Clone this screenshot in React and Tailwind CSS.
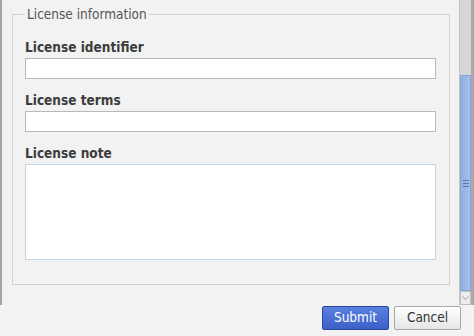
import React from 'react';

const font = { fontFamily: '"DejaVu Sans Condensed", "DejaVu Sans", Verdana, sans-serif' };

function Field({ label, children, first }) {
  return (
    <div className={first ? '' : 'mt-[13px]'}>
      <label className="block text-[13.5px] font-bold leading-[16px] text-[#3c3c3c] mb-[3px]">
        {label}
      </label>
      {children}
    </div>
  );
}

function Scrollbar() {
  return (
    <div className="w-[15px] flex flex-col bg-[#d6d6d6] border-l border-[#c4c4c4] border-r-[3px] border-r-[#a9a9a9]">
      <div className="h-[75px]" />
      <div className="flex-1 flex items-center justify-center bg-gradient-to-r from-[#8fb0e2] to-[#a6c0ea] border border-[#86a3d6]">
        <div className="flex flex-col gap-[2px]">
          <div className="w-[6px] h-[1px] bg-[#5577b8]" />
          <div className="w-[6px] h-[1px] bg-[#5577b8]" />
          <div className="w-[6px] h-[1px] bg-[#5577b8]" />
        </div>
      </div>
      <div className="h-[14px] flex items-center justify-center bg-[#ececec] border border-[#c0c0c0]">
        <svg width="7" height="5" viewBox="0 0 7 5">
          <path d="M0.5 0.5 L3.5 3.5 L6.5 0.5" fill="none" stroke="#9a9a9a" strokeWidth="1" />
        </svg>
      </div>
    </div>
  );
}

export default function App() {
  return (
    <div className="w-[474px] h-[336px] bg-[#f2f2f2] flex flex-col overflow-hidden" style={font}>
      <div className="h-[305px] flex border-l-2 border-[#a4a4a4]">
        <div className="flex-1 pl-[10px] pr-[9px]">
          <fieldset className="mt-[6px] border border-[#d2d2d2] pl-[12px] pr-[13px] pt-[16px] pb-[24px]">
            <legend className="px-[2px] text-[13.5px] leading-[17px] text-[#555555]">License information</legend>
            <Field label="License identifier" first>
              <input type="text" className="block w-full h-[21px] bg-white border border-[#b9b9b9] outline-none" />
            </Field>
            <Field label="License terms">
              <input type="text" className="block w-full h-[21px] bg-white border border-[#b9b9b9] outline-none" />
            </Field>
            <Field label="License note">
              <textarea className="block w-full h-[96px] bg-white border border-[#c3d3e6] resize-none outline-none" />
            </Field>
          </fieldset>
        </div>
        <Scrollbar />
      </div>
      <div className="flex-1 flex items-start justify-end gap-[5px] pr-[13px] pt-[1px]">
        <button className="w-[67px] h-[24px] rounded-[2px] border border-[#2c48a0] bg-gradient-to-b from-[#5a80e0] to-[#3c60c8] text-white text-[13.5px] leading-none">
          Submit
        </button>
        <button className="w-[67px] h-[24px] rounded-[2px] border border-[#a8a8a8] bg-gradient-to-b from-white to-[#e6e6e6] text-[#333333] text-[13.5px] leading-none">
          Cancel
        </button>
      </div>
    </div>
  );
}
